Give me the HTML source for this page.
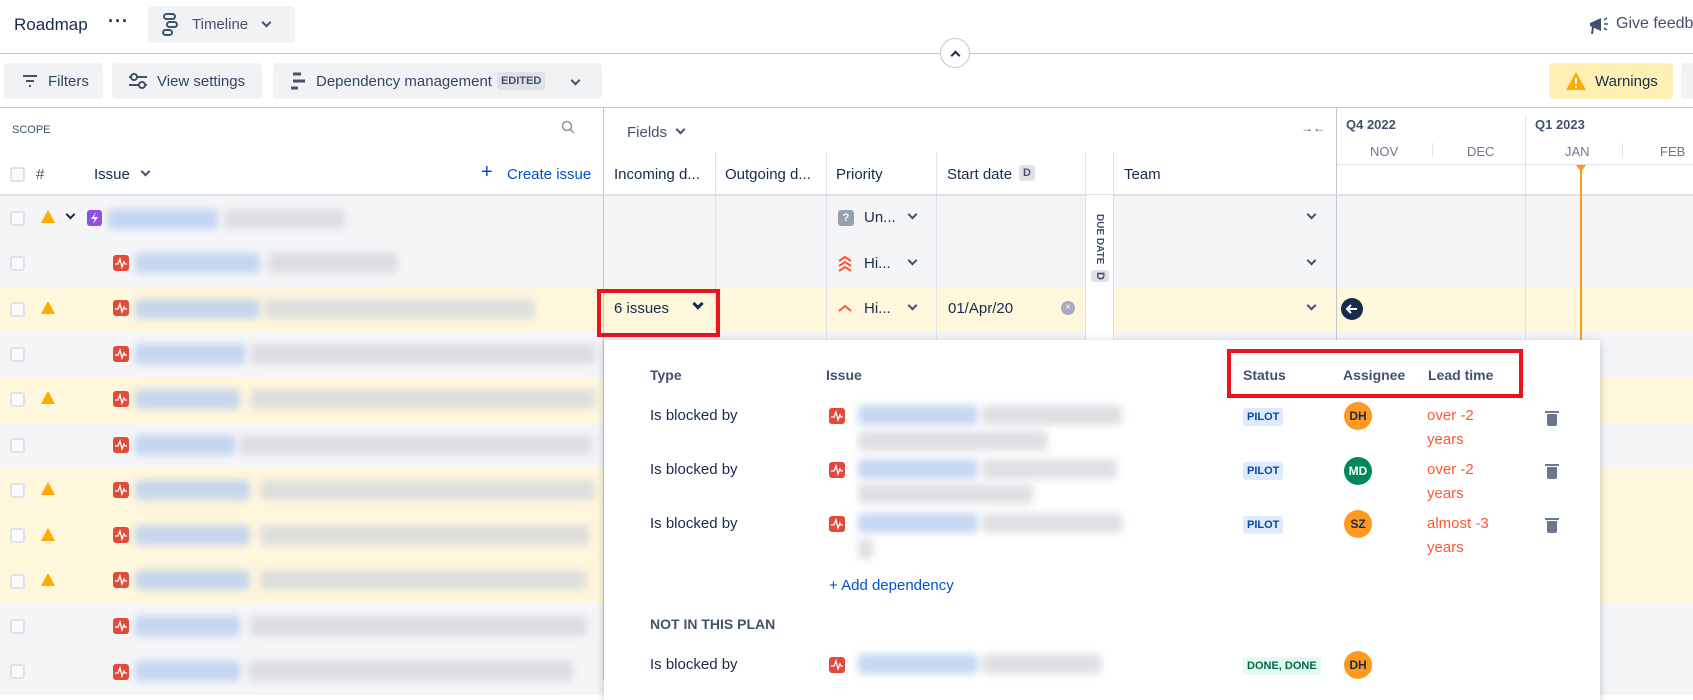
<!DOCTYPE html>
<html><head><meta charset="utf-8"><style>
*{box-sizing:border-box;margin:0;padding:0}
body{width:1693px;height:680px;overflow:hidden;background:#fff;font-family:"Liberation Sans",sans-serif;color:#172b4d;position:relative;font-size:15px}
.a{position:absolute}
.btn{position:absolute;background:#f1f2f4;border-radius:4px;height:36px;top:63px;display:flex;align-items:center;font-size:15px;color:#344563}
.hl{position:absolute;left:0;width:1693px;height:2px;background:#dfe1e6}
.vl{position:absolute;width:1px;background:#dfe1e6}
.row{position:absolute;left:0;width:1693px;height:46px}
.g{background:#f4f5f7}.y{background:#fff7dc}
.cb{position:absolute;left:10px;width:15px;height:15px;border:2px solid #dfe1e6;border-radius:3px;background:#fafbfc}
.warn{position:absolute;left:41px;width:0;height:0;border-left:7px solid transparent;border-right:7px solid transparent;border-bottom:13px solid #ffab00}
.bug{position:absolute;left:113px;width:16px;height:16px;background:#e5493a;border-radius:3px}
.bug svg{position:absolute;left:0;top:0}
.bl{position:absolute;height:20px;border-radius:4px;filter:blur(4px);opacity:.8}
.blu{background:#b8cdf0}.gr{background:#d6d8dc}
.hd{position:absolute;font-size:15px;color:#172b4d;top:166px}
.pop{position:absolute;left:604px;top:340px;width:996px;height:360px;background:#fff;box-shadow:0 2px 8px rgba(9,30,66,.25)}
.pt{position:absolute;font-size:15px;color:#172b4d}
.ph{position:absolute;font-size:14px;font-weight:bold;color:#42526e;top:367px}
.pil{position:absolute;left:1243px;height:18px;background:#deebff;color:#0747a6;font-size:11px;font-weight:bold;padding:3px 4px;border-radius:3px}
.av{position:absolute;left:1344px;width:28px;height:28px;border-radius:50%;color:#172b4d;font-size:12px;font-weight:bold;display:flex;align-items:center;justify-content:center}
.lt{position:absolute;left:1427px;color:#ff5630;font-size:15px;line-height:24px}
.tr{position:absolute;left:1547px;width:10px;height:12px;background:#6b778c;border-radius:0 0 2px 2px}
.tr:before{content:"";position:absolute;left:-2px;top:-3px;width:14px;height:2px;background:#6b778c}
.chev{position:absolute;width:7px;height:7px;border-right:2px solid #42526e;border-bottom:2px solid #42526e;transform:rotate(45deg)}
</style></head><body>
<!-- top bar -->
<div class="a" style="left:14px;top:15px;font-size:17px">Roadmap</div>
<div class="a" style="left:108px;top:11px;font-size:18px;font-weight:bold;letter-spacing:1px">···</div>
<div class="a" style="left:148px;top:6px;width:147px;height:37px;background:#f1f2f4;border-radius:4px"></div>
<svg class="a" style="left:162px;top:13px" width="16" height="24"><rect x="2" y="1" width="11" height="5" rx="2.5" fill="none" stroke="#42526e" stroke-width="2"/><rect x="5" y="9" width="10" height="5" rx="2.5" fill="none" stroke="#42526e" stroke-width="2"/><rect x="1" y="17" width="9" height="5" rx="2.5" fill="none" stroke="#42526e" stroke-width="2"/></svg>
<div class="a" style="left:192px;top:16px;font-size:15px;color:#42526e">Timeline</div>
<div class="chev" style="left:263px;top:19px"></div>
<svg class="a" style="left:1587px;top:14px" width="22" height="22"><path d="M3 9 L14 4 L14 17 L3 12Z" fill="#42526e"/><path d="M6 13 L5 20" stroke="#42526e" stroke-width="2"/><path d="M17 6l3-2M17 10h4M17 14l3 2" stroke="#42526e" stroke-width="1.5"/></svg>
<div class="a" style="left:1616px;top:15px;font-size:16px;color:#42526e;white-space:nowrap">Give feedback</div>
<div class="hl" style="top:53px;height:1px;background:#c1c7d0"></div>
<div class="a" style="left:940px;top:38px;width:30px;height:30px;border:1px solid #c1c7d0;border-radius:50%;background:#fff"></div>
<div class="chev" style="left:952px;top:52px;transform:rotate(-135deg);border-color:#172b4d"></div>
<!-- toolbar -->
<div class="btn" style="left:4px;width:99px"><svg style="margin-left:18px" width="16" height="14"><path d="M1 2h14M4 7h8M7 12h2" stroke="#42526e" stroke-width="2"/></svg><span style="margin-left:10px">Filters</span></div>
<div class="btn" style="left:112px;width:150px"><svg style="margin-left:16px" width="20" height="16"><path d="M1 4h18M1 12h18" stroke="#42526e" stroke-width="2"/><circle cx="6" cy="4" r="3" fill="#f1f2f4" stroke="#42526e" stroke-width="2"/><circle cx="14" cy="12" r="3" fill="#f1f2f4" stroke="#42526e" stroke-width="2"/></svg><span style="margin-left:9px">View settings</span></div>
<div class="btn" style="left:273px;width:329px"><svg style="margin-left:17px" width="16" height="18"><path d="M3 2h8M3 9h12M1 16h7" stroke="#42526e" stroke-width="3"/></svg><span style="margin-left:10px">Dependency management</span><span style="margin-left:5px;background:#dfe1e6;font-size:11px;font-weight:bold;padding:3px 4px;border-radius:3px;color:#42526e">EDITED</span></div>
<div class="chev" style="left:572px;top:77px"></div>
<div class="btn" style="left:1549px;width:124px;background:#fff0b3;color:#172b4d"><svg style="margin-left:16px" width="22" height="20"><path d="M11 1L21 19H1Z" fill="#ffab00"/><path d="M11 7v6M11 15v2" stroke="#fff" stroke-width="2"/></svg><span style="margin-left:8px">Warnings</span></div>
<div class="btn" style="left:1681px;width:20px"></div>
<div class="hl" style="top:107px;height:1px;background:#c1c7d0"></div>
<!-- header -->
<div class="a" style="left:12px;top:124px;font-size:11px;color:#42526e">SCOPE</div>
<svg class="a" style="left:561px;top:120px" width="14" height="14"><circle cx="6" cy="6" r="4.5" fill="none" stroke="#8993a4" stroke-width="1.5"/><path d="M9 9l4 4" stroke="#8993a4" stroke-width="1.5"/></svg>
<div class="cb" style="top:167px"></div>
<div class="hd" style="left:36px;color:#42526e">#</div>
<div class="hd" style="left:94px">Issue</div><div class="chev" style="left:142px;top:168px"></div>
<div class="hd" style="left:481px;color:#0052cc;font-size:20px;top:161px">+</div>
<div class="hd" style="left:507px;color:#0052cc">Create issue</div>
<div class="vl" style="left:603px;top:108px;height:572px;background:#c1c7d0"></div>
<div class="a" style="left:627px;top:124px;font-size:15px;color:#42526e">Fields</div><div class="chev" style="left:677px;top:126px"></div>
<div class="a" style="left:1301px;top:121px;font-size:12px;font-weight:bold;color:#42526e">→←</div>
<div class="hd" style="left:614px">Incoming d...</div>
<div class="hd" style="left:725px">Outgoing d...</div>
<div class="hd" style="left:836px">Priority</div>
<div class="hd" style="left:947px">Start date</div>
<div class="a" style="left:1019px;top:165px;background:#dfe1e6;font-size:11px;font-weight:bold;padding:2px 4px;border-radius:3px;color:#42526e">D</div>
<div class="hd" style="left:1124px">Team</div>
<div class="vl" style="left:715px;top:152px;height:190px"></div>
<div class="vl" style="left:826px;top:152px;height:190px"></div>
<div class="vl" style="left:936px;top:152px;height:190px"></div>
<div class="vl" style="left:1085px;top:152px;height:190px"></div>
<div class="vl" style="left:1113px;top:152px;height:190px"></div>
<div class="vl" style="left:1336px;top:108px;height:572px;background:#c1c7d0"></div>
<div class="a" style="left:1346px;top:117px;font-size:13px;font-weight:bold;color:#42526e">Q4 2022</div>
<div class="a" style="left:1535px;top:117px;font-size:13px;font-weight:bold;color:#42526e">Q1 2023</div>
<div class="vl" style="left:1525px;top:116px;height:564px"></div>
<div class="a" style="left:1370px;top:144px;font-size:13px;color:#6b778c">NOV</div>
<div class="a" style="left:1467px;top:144px;font-size:13px;color:#6b778c">DEC</div>
<div class="a" style="left:1565px;top:144px;font-size:13px;color:#6b778c">JAN</div>
<div class="a" style="left:1660px;top:144px;font-size:13px;color:#6b778c">FEB</div>
<div class="vl" style="left:1432px;top:143px;height:14px"></div>
<div class="vl" style="left:1622px;top:143px;height:14px"></div>
<div class="a" style="left:1337px;top:164px;width:360px;height:1px;background:#dfe1e6"></div>
<div class="hl" style="top:194px;background:#dfe1e6;box-shadow:0 1px 2px rgba(0,0,0,.08)"></div>
<!-- rows -->
<div class="row g" style="top:196px"></div>
<div class="row g" style="top:241px"></div>
<div class="row y" style="top:287px"></div>
<div class="row g" style="top:332px"></div>
<div class="row y" style="top:377px"></div>
<div class="row g" style="top:423px"></div>
<div class="row y" style="top:468px"></div>
<div class="row y" style="top:513px"></div>
<div class="row y" style="top:559px"></div>
<div class="row g" style="top:604px"></div>
<div class="row g" style="top:649px"></div>
<div class="vl" style="left:603px;top:195px;height:485px;background:#c1c7d0"></div>
<div class="vl" style="left:1336px;top:195px;height:485px;background:#c1c7d0"></div>
<div class="vl" style="left:1525px;top:195px;height:485px"></div>
<div class="vl" style="left:715px;top:195px;height:145px"></div>
<div class="vl" style="left:826px;top:195px;height:145px"></div>
<div class="vl" style="left:936px;top:195px;height:145px"></div>
<div class="vl" style="left:1085px;top:195px;height:145px"></div>
<div class="vl" style="left:1113px;top:195px;height:145px"></div>
<div class="a" style="left:1086px;top:195px;width:27px;height:145px;background:#fff"></div>
<div class="a" style="left:1580px;top:165px;width:2px;height:515px;background:#ff991f"></div>
<div class="a" style="left:1576px;top:165px;border-left:5px solid transparent;border-right:5px solid transparent;border-top:7px solid #ff991f"></div>
<!-- left row content -->
<div class="cb" style="top:211px"></div><div class="warn" style="top:210px"></div>
<div class="chev" style="left:67px;top:211px;border-color:#172b4d"></div>
<div class="a" style="left:87px;top:210px;width:15px;height:16px;background:#904ee2;border-radius:3px"><svg width="15" height="16"><path d="M9 2L4 9h4l-2 5 5-7H7z" fill="#fff"/></svg></div>
<div class="bl blu" style="left:108px;top:209px;width:110px"></div><div class="bl gr" style="left:225px;top:209px;width:120px"></div>
<div class="cb" style="top:256px"></div><div class="bug" style="top:255px"><svg width="16" height="16"><path d="M2 9h3l2-5 2 8 2-5 1 2h2" fill="none" stroke="#fff" stroke-width="1.3"/></svg></div>
<div class="bl blu" style="left:135px;top:253px;width:125px"></div><div class="bl gr" style="left:268px;top:253px;width:130px"></div>
<div class="cb" style="top:302px"></div><div class="warn" style="top:301px"></div><div class="bug" style="top:300px"><svg width="16" height="16"><path d="M2 9h3l2-5 2 8 2-5 1 2h2" fill="none" stroke="#fff" stroke-width="1.3"/></svg></div>
<div class="bl blu" style="left:135px;top:299px;width:125px"></div><div class="bl gr" style="left:265px;top:299px;width:270px"></div>
<div class="cb" style="top:347px"></div><div class="bug" style="top:346px"><svg width="16" height="16"><path d="M2 9h3l2-5 2 8 2-5 1 2h2" fill="none" stroke="#fff" stroke-width="1.3"/></svg></div>
<div class="bl blu" style="left:135px;top:344px;width:110px"></div><div class="bl gr" style="left:250px;top:344px;width:345px"></div>
<div class="cb" style="top:392px"></div><div class="warn" style="top:391px"></div><div class="bug" style="top:391px"><svg width="16" height="16"><path d="M2 9h3l2-5 2 8 2-5 1 2h2" fill="none" stroke="#fff" stroke-width="1.3"/></svg></div>
<div class="bl blu" style="left:135px;top:389px;width:105px"></div><div class="bl gr" style="left:250px;top:389px;width:345px"></div>
<div class="cb" style="top:438px"></div><div class="bug" style="top:437px"><svg width="16" height="16"><path d="M2 9h3l2-5 2 8 2-5 1 2h2" fill="none" stroke="#fff" stroke-width="1.3"/></svg></div>
<div class="bl blu" style="left:135px;top:435px;width:100px"></div><div class="bl gr" style="left:240px;top:435px;width:352px"></div>
<div class="cb" style="top:483px"></div><div class="warn" style="top:482px"></div><div class="bug" style="top:482px"><svg width="16" height="16"><path d="M2 9h3l2-5 2 8 2-5 1 2h2" fill="none" stroke="#fff" stroke-width="1.3"/></svg></div>
<div class="bl blu" style="left:135px;top:480px;width:115px"></div><div class="bl gr" style="left:260px;top:480px;width:335px"></div>
<div class="cb" style="top:528px"></div><div class="warn" style="top:528px"></div><div class="bug" style="top:527px"><svg width="16" height="16"><path d="M2 9h3l2-5 2 8 2-5 1 2h2" fill="none" stroke="#fff" stroke-width="1.3"/></svg></div>
<div class="bl blu" style="left:135px;top:525px;width:115px"></div><div class="bl gr" style="left:260px;top:525px;width:330px"></div>
<div class="cb" style="top:574px"></div><div class="warn" style="top:573px"></div><div class="bug" style="top:572px"><svg width="16" height="16"><path d="M2 9h3l2-5 2 8 2-5 1 2h2" fill="none" stroke="#fff" stroke-width="1.3"/></svg></div>
<div class="bl blu" style="left:135px;top:570px;width:115px"></div><div class="bl gr" style="left:260px;top:570px;width:327px"></div>
<div class="cb" style="top:619px"></div><div class="bug" style="top:618px"><svg width="16" height="16"><path d="M2 9h3l2-5 2 8 2-5 1 2h2" fill="none" stroke="#fff" stroke-width="1.3"/></svg></div>
<div class="bl blu" style="left:135px;top:616px;width:105px"></div><div class="bl gr" style="left:250px;top:616px;width:337px"></div>
<div class="cb" style="top:664px"></div><div class="bug" style="top:664px"><svg width="16" height="16"><path d="M2 9h3l2-5 2 8 2-5 1 2h2" fill="none" stroke="#fff" stroke-width="1.3"/></svg></div>
<div class="bl blu" style="left:135px;top:661px;width:105px"></div><div class="bl gr" style="left:248px;top:661px;width:325px"></div>
<!-- fields rows -->
<div class="a" style="left:838px;top:210px;width:16px;height:16px;background:#97a0af;border-radius:3px;color:#fff;font-size:11px;font-weight:bold;text-align:center;line-height:16px">?</div>
<div class="a" style="left:864px;top:209px">Un...</div><div class="chev" style="left:909px;top:211px"></div>
<svg class="a" style="left:837px;top:255px" width="16" height="18"><path d="M2 6l6-4 6 4M2 11l6-4 6 4M2 16l6-4 6 4" fill="none" stroke="#ff5630" stroke-width="2"/></svg>
<div class="a" style="left:864px;top:255px">Hi...</div><div class="chev" style="left:909px;top:257px"></div>
<svg class="a" style="left:837px;top:303px" width="16" height="10"><path d="M2 8l6-5 6 5" fill="none" stroke="#ff5630" stroke-width="2"/></svg>
<div class="a" style="left:864px;top:300px">Hi...</div><div class="chev" style="left:909px;top:302px"></div>
<div class="a" style="left:948px;top:300px">01/Apr/20</div>
<div class="a" style="left:1061px;top:301px;width:14px;height:14px;border-radius:50%;background:#a5adba;color:#fff;font-size:10px;text-align:center;line-height:14px">×</div>
<div class="a" style="left:1094px;top:214px;font-size:10px;font-weight:bold;color:#42526e;writing-mode:vertical-rl">DUE DATE</div>
<div class="a" style="left:1091px;top:270px;background:#dfe1e6;font-size:11px;font-weight:bold;padding:2px 3px;border-radius:3px;color:#42526e;writing-mode:vertical-rl">D</div>
<div class="chev" style="left:1308px;top:211px"></div>
<div class="chev" style="left:1308px;top:257px"></div>
<div class="chev" style="left:1308px;top:302px"></div>
<div class="a" style="left:1341px;top:298px;width:22px;height:22px;border-radius:50%;background:#172b4d"><svg width="22" height="22"><path d="M16 11H6M10 7l-4 4 4 4" fill="none" stroke="#fff" stroke-width="2"/></svg></div>
<div class="a" style="left:614px;top:300px">6 issues</div>
<div class="chev" style="left:694px;top:300px;border-color:#172b4d;border-width:3px;width:8px;height:8px"></div>
<div class="a" style="left:597px;top:289px;width:123px;height:48px;border:4px solid #e8141f"></div>
<!-- popup -->
<div class="pop"></div>
<div class="ph" style="left:650px">Type</div>
<div class="ph" style="left:826px">Issue</div>
<div class="ph" style="left:1243px">Status</div>
<div class="ph" style="left:1343px">Assignee</div>
<div class="ph" style="left:1428px">Lead time</div>
<div class="a" style="left:1227px;top:349px;width:296px;height:49px;border:4px solid #e8141f"></div>
<div class="pt" style="left:650px;top:407px">Is blocked by</div>
<div class="bug" style="left:829px;top:408px"><svg width="16" height="16"><path d="M2 9h3l2-5 2 8 2-5 1 2h2" fill="none" stroke="#fff" stroke-width="1.3"/></svg></div>
<div class="bl blu" style="left:858px;top:405px;width:120px"></div><div class="bl gr" style="left:982px;top:405px;width:140px"></div><div class="bl gr" style="left:858px;top:431px;width:190px"></div>
<div class="pil" style="top:408px">PILOT</div>
<div class="av" style="top:402px;background:#ff991f">DH</div>
<div class="lt" style="top:404px">over -2<br>years</div>
<div class="tr" style="top:414px"></div>
<div class="pt" style="left:650px;top:461px">Is blocked by</div>
<div class="bug" style="left:829px;top:462px"><svg width="16" height="16"><path d="M2 9h3l2-5 2 8 2-5 1 2h2" fill="none" stroke="#fff" stroke-width="1.3"/></svg></div>
<div class="bl blu" style="left:858px;top:459px;width:120px"></div><div class="bl gr" style="left:982px;top:459px;width:135px"></div><div class="bl gr" style="left:858px;top:484px;width:175px"></div>
<div class="pil" style="top:462px">PILOT</div>
<div class="av" style="top:457px;background:#00875a;color:#fff">MD</div>
<div class="lt" style="top:458px">over -2<br>years</div>
<div class="tr" style="top:467px"></div>
<div class="pt" style="left:650px;top:515px">Is blocked by</div>
<div class="bug" style="left:829px;top:516px"><svg width="16" height="16"><path d="M2 9h3l2-5 2 8 2-5 1 2h2" fill="none" stroke="#fff" stroke-width="1.3"/></svg></div>
<div class="bl blu" style="left:858px;top:513px;width:120px"></div><div class="bl gr" style="left:982px;top:513px;width:140px"></div><div class="bl gr" style="left:858px;top:539px;width:15px"></div>
<div class="pil" style="top:516px">PILOT</div>
<div class="av" style="top:510px;background:#ff991f">SZ</div>
<div class="lt" style="top:512px">almost -3<br>years</div>
<div class="tr" style="top:521px"></div>
<div class="pt" style="left:829px;top:577px;color:#0052cc">+ Add dependency</div>
<div class="pt" style="left:650px;top:616px;font-weight:bold;color:#42526e;font-size:14px">NOT IN THIS PLAN</div>
<div class="pt" style="left:650px;top:656px">Is blocked by</div>
<div class="bug" style="left:829px;top:657px"><svg width="16" height="16"><path d="M2 9h3l2-5 2 8 2-5 1 2h2" fill="none" stroke="#fff" stroke-width="1.3"/></svg></div>
<div class="bl blu" style="left:858px;top:654px;width:120px"></div><div class="bl gr" style="left:982px;top:654px;width:120px"></div>
<div class="pil" style="top:657px;background:#e3fcef;color:#006644">DONE, DONE</div>
<div class="av" style="top:651px;background:#ff991f">DH</div>
</body></html>
